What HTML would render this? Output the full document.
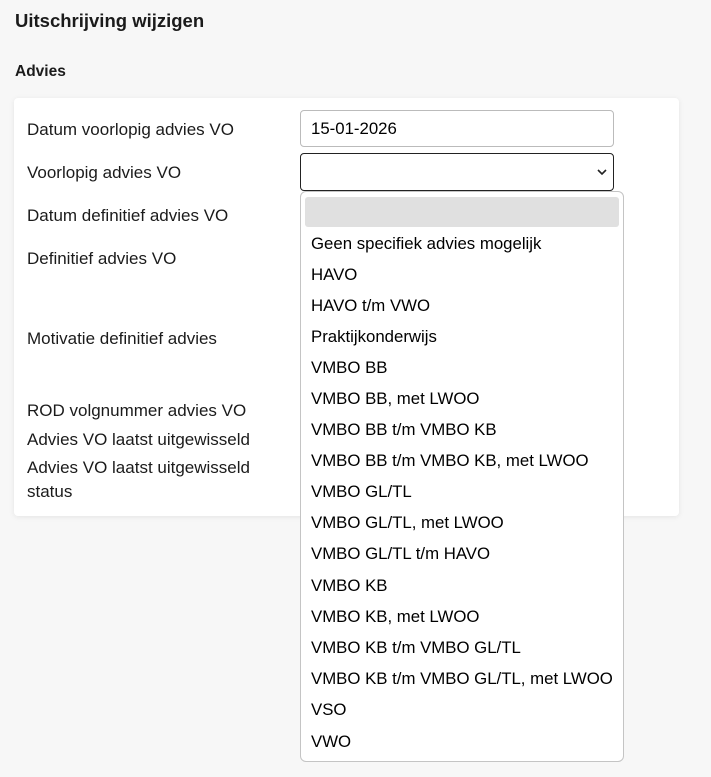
<!DOCTYPE html>
<html><head><meta charset="utf-8"><style>
body{margin:0;width:711px;height:777px;background:#f7f7f7;font-family:"Liberation Sans",sans-serif;color:#1b1b1b;position:relative;overflow:hidden}
.a{position:absolute;white-space:nowrap}
h1{position:absolute;left:15px;top:10px;margin:0;font-size:18.5px;font-weight:bold}
h2{position:absolute;left:15px;top:63px;margin:0;font-size:15.5px;font-weight:bold}
.card{position:absolute;left:14px;top:98px;width:665px;height:418px;background:#fff;border-radius:4px;box-shadow:0 1px 6px rgba(0,0,0,.08)}
.l{position:absolute;left:27px;font-size:17px;line-height:24px}
.in{position:absolute;left:300px;width:314px;box-sizing:border-box;border:1px solid #bbb;border-radius:4px;background:#fff}
.dd{position:absolute;left:300px;top:191px;width:324px;height:571px;box-sizing:border-box;border:1px solid #c4c4c4;border-radius:6px;background:#fff}
.o{position:absolute;left:10px;font-size:16.8px;line-height:20px;color:#000}
</style></head><body>
<h1>Uitschrijving wijzigen</h1>
<h2>Advies</h2>
<div class="card"></div>
<div class="l" style="top:118px">Datum voorlopig advies VO</div>
<div class="l" style="top:161px">Voorlopig advies VO</div>
<div class="l" style="top:204px">Datum definitief advies VO</div>
<div class="l" style="top:247px">Definitief advies VO</div>
<div class="l" style="top:327px">Motivatie definitief advies</div>
<div class="l" style="top:399px">ROD volgnummer advies VO</div>
<div class="l" style="top:428px">Advies VO laatst uitgewisseld</div>
<div class="l" style="top:456px">Advies VO laatst uitgewisseld<br>status</div>
<div class="in" style="top:110px;height:37px"><span class="a" style="left:10px;top:8px;font-size:16.8px;color:#000">15-01-2026</span></div>
<div class="in" style="top:153px;height:38px;border-color:#222"><svg class="a" style="left:296px;top:15px" width="10" height="7" viewBox="0 0 10 7"><path d="M1 1l4 4 4-4" fill="none" stroke="#222" stroke-width="1.6"/></svg></div>
<div class="dd">
<div class="a" style="left:4px;top:5px;width:314px;height:30px;background:#e0e0e0;border-radius:3px"></div>
<div class="o" style="top:42px">Geen specifiek advies mogelijk</div>
<div class="o" style="top:73px">HAVO</div>
<div class="o" style="top:104px">HAVO t/m VWO</div>
<div class="o" style="top:135px">Praktijkonderwijs</div>
<div class="o" style="top:166px">VMBO BB</div>
<div class="o" style="top:197px">VMBO BB, met LWOO</div>
<div class="o" style="top:228px">VMBO BB t/m VMBO KB</div>
<div class="o" style="top:259px">VMBO BB t/m VMBO KB, met LWOO</div>
<div class="o" style="top:290px">VMBO GL/TL</div>
<div class="o" style="top:321px">VMBO GL/TL, met LWOO</div>
<div class="o" style="top:352px">VMBO GL/TL t/m HAVO</div>
<div class="o" style="top:384px">VMBO KB</div>
<div class="o" style="top:415px">VMBO KB, met LWOO</div>
<div class="o" style="top:446px">VMBO KB t/m VMBO GL/TL</div>
<div class="o" style="top:477px">VMBO KB t/m VMBO GL/TL, met LWOO</div>
<div class="o" style="top:508px">VSO</div>
<div class="o" style="top:540px">VWO</div>
</div>
</body></html>
